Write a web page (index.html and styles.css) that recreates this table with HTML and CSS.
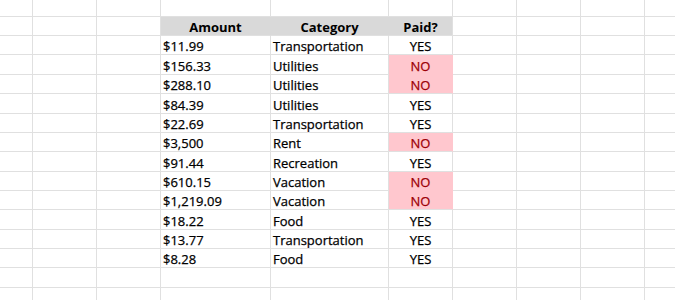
FILE: index.html
```html
<!DOCTYPE html>
<html>
<head>
<meta charset="utf-8">
<link rel="stylesheet" href="styles.css">
<title>Expenses</title>
</head>
<body>
<div class="sheet">
  <div class="c"></div><div class="c"></div><div class="c"></div><div class="c"></div><div class="c"></div><div class="c"></div><div class="c"></div><div class="c"></div><div class="c"></div><div class="c"></div>

  <div class="c"></div><div class="c"></div><div class="c"></div><div class="c h">Amount</div><div class="c h">Category</div><div class="c h hl">Paid?</div><div class="c"></div><div class="c"></div><div class="c"></div><div class="c"></div>

  <div class="c"></div><div class="c"></div><div class="c"></div><div class="c">$11.99</div><div class="c">Transportation</div><div class="c m">YES</div><div class="c"></div><div class="c"></div><div class="c"></div><div class="c"></div>

  <div class="c"></div><div class="c"></div><div class="c"></div><div class="c">$156.33</div><div class="c">Utilities</div><div class="c m no nn">NO</div><div class="c"></div><div class="c"></div><div class="c"></div><div class="c"></div>

  <div class="c"></div><div class="c"></div><div class="c"></div><div class="c">$288.10</div><div class="c">Utilities</div><div class="c m no">NO</div><div class="c"></div><div class="c"></div><div class="c"></div><div class="c"></div>

  <div class="c"></div><div class="c"></div><div class="c"></div><div class="c">$84.39</div><div class="c">Utilities</div><div class="c m">YES</div><div class="c"></div><div class="c"></div><div class="c"></div><div class="c"></div>

  <div class="c"></div><div class="c"></div><div class="c"></div><div class="c">$22.69</div><div class="c">Transportation</div><div class="c m">YES</div><div class="c"></div><div class="c"></div><div class="c"></div><div class="c"></div>

  <div class="c"></div><div class="c"></div><div class="c"></div><div class="c">$3,500</div><div class="c">Rent</div><div class="c m no">NO</div><div class="c"></div><div class="c"></div><div class="c"></div><div class="c"></div>

  <div class="c"></div><div class="c"></div><div class="c"></div><div class="c">$91.44</div><div class="c">Recreation</div><div class="c m">YES</div><div class="c"></div><div class="c"></div><div class="c"></div><div class="c"></div>

  <div class="c"></div><div class="c"></div><div class="c"></div><div class="c">$610.15</div><div class="c">Vacation</div><div class="c m no nn">NO</div><div class="c"></div><div class="c"></div><div class="c"></div><div class="c"></div>

  <div class="c"></div><div class="c"></div><div class="c"></div><div class="c">$1,219.09</div><div class="c">Vacation</div><div class="c m no">NO</div><div class="c"></div><div class="c"></div><div class="c"></div><div class="c"></div>

  <div class="c"></div><div class="c"></div><div class="c"></div><div class="c">$18.22</div><div class="c">Food</div><div class="c m">YES</div><div class="c"></div><div class="c"></div><div class="c"></div><div class="c"></div>

  <div class="c"></div><div class="c"></div><div class="c"></div><div class="c">$13.77</div><div class="c">Transportation</div><div class="c m">YES</div><div class="c"></div><div class="c"></div><div class="c"></div><div class="c"></div>

  <div class="c"></div><div class="c"></div><div class="c"></div><div class="c">$8.28</div><div class="c">Food</div><div class="c m">YES</div><div class="c"></div><div class="c"></div><div class="c"></div><div class="c"></div>

  <div class="c"></div><div class="c"></div><div class="c"></div><div class="c"></div><div class="c"></div><div class="c"></div><div class="c"></div><div class="c"></div><div class="c"></div><div class="c"></div>

  <div class="c"></div><div class="c"></div><div class="c"></div><div class="c"></div><div class="c"></div><div class="c"></div><div class="c"></div><div class="c"></div><div class="c"></div><div class="c"></div>
</div>
</body>
</html>
```

FILE: styles.css
```css
html, body {
  margin: 0;
  padding: 0;
  background: #ffffff;
  overflow: hidden;
}

.sheet {
  display: grid;
  grid-template-columns: 33px 64px 64px 110px 118px 64px 64px 64px 64px 64px;
  grid-template-rows: 17px 19px 19px 20px 19px 20px 19px 19px 20px 19px 19px 20px 19px 19px 20px 20px;
  width: 675px;
  height: 300px;
  overflow: hidden;
  font-family: "Open Sans", "Liberation Sans", sans-serif;
  font-size: 13px;
  color: #000000;
  -webkit-text-stroke: 0.25px currentColor;
}

.c {
  box-sizing: border-box;
  border-right: 1px solid #e0e0e0;
  border-bottom: 1px solid #e0e0e0;
  display: flex;
  align-items: flex-end;
  padding: 0 2px;
  line-height: 16px;
  white-space: nowrap;
  overflow: hidden;
}

.h {
  background: #d9d9d9;
  border-right-color: #d9d9d9;
  justify-content: center;
  font-weight: 700;
  -webkit-text-stroke: 0;
}

.h.hl {
  border-right-color: #e0e0e0;
}

.m {
  justify-content: center;
}

.no {
  background: #ffc7ce;
  border-right-color: #ffc7ce;
  color: #9c0006;
}

.no.nn {
  border-bottom-color: #ffc7ce;
}
```
